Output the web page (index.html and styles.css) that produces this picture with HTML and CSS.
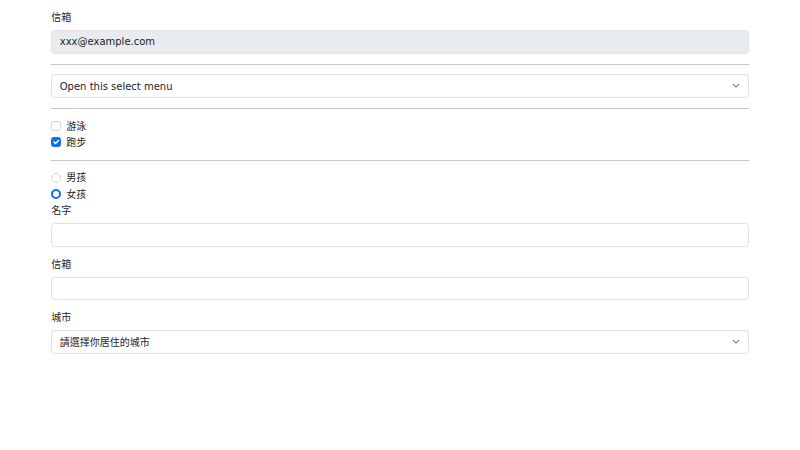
FILE: index.html
```html
<!DOCTYPE html>
<html lang="zh-Hant">
<head>
<meta charset="utf-8">
<title>Form</title>
<link rel="stylesheet" href="styles.css">
</head>
<body>
<div class="container">
  <form class="form">
    <div>
      <label class="form-label">信箱</label>
      <input class="form-control" type="text" value="xxx@example.com" disabled>
    </div>
    <hr class="divider">
    <div class="select-wrap">
      <select class="form-select"><option>Open this select menu</option></select>
      <svg class="chevron" viewBox="0 0 16 16" width="10" height="7.5"><path d="m2 5 6 6 6-6" fill="none" stroke="#343a40" stroke-width="2" stroke-linecap="round" stroke-linejoin="round"/></svg>
    </div>
    <hr class="divider">
    <div class="form-check"><span class="check-box"></span><span>游泳</span></div>
    <div class="form-check"><span class="check-box checked"><svg viewBox="0 0 20 20" width="10" height="10"><path d="m6 10 3 3 6-6" fill="none" stroke="#fff" stroke-width="3" stroke-linecap="round" stroke-linejoin="round"/></svg></span><span>跑步</span></div>
    <hr class="divider">
    <div class="form-check"><span class="radio"></span><span>男孩</span></div>
    <div class="form-check"><span class="radio checked"></span><span>女孩</span></div>
    <div class="field">
      <label class="form-label">名字</label>
      <input class="form-control" type="text">
    </div>
    <div class="field">
      <label class="form-label">信箱</label>
      <input class="form-control" type="text">
    </div>
    <div class="field">
      <label class="form-label">城市</label>
      <div class="select-wrap">
        <select class="form-select"><option>請選擇你居住的城市</option></select>
        <svg class="chevron" viewBox="0 0 16 16" width="10" height="7.5"><path d="m2 5 6 6 6-6" fill="none" stroke="#343a40" stroke-width="2" stroke-linecap="round" stroke-linejoin="round"/></svg>
      </div>
    </div>
  </form>
</div>
</body>
</html>
```
FILE: styles.css
```css
body {
  margin: 0;
  font-family: "DejaVu Sans", "Noto Sans CJK TC", sans-serif;
  font-size: 10px;
  line-height: 15px;
  color: #212529;
  background: #fff;
}
.container {
  max-width: 712.5px;
  margin: 0 auto;
  padding: 0 7.5px;
  box-sizing: border-box;
}
.form {
  margin-top: 10px;
}
.form-label {
  display: block;
  margin-bottom: 5px;
}
.form-control,
.form-select {
  display: block;
  box-sizing: border-box;
  width: 100%;
  margin: 0;
  padding: 3.75px 7.5px;
  font-family: inherit;
  font-size: 10px;
  line-height: 15px;
  color: #212529;
  background: #fff;
  border: 1px solid #dee2e6;
  border-radius: 3.75px;
  height: 23.75px;
}
.form-control:disabled {
  background: #e9ecef;
  color: #212529;
  opacity: 1;
}
.form-select {
  appearance: none;
  -webkit-appearance: none;
  padding-right: 22.5px;
}
.select-wrap {
  display: grid;
}
.select-wrap > * {
  grid-area: 1 / 1;
}
.chevron {
  justify-self: end;
  align-self: center;
  margin-right: 7.5px;
  pointer-events: none;
}
.divider {
  margin: 10px 0 9.5px;
  border: 0;
  border-top: 1px solid #212529;
  opacity: 0.25;
}
.form-check {
  display: flex;
  align-items: center;
  gap: 5px;
  min-height: 15px;
  margin-bottom: 1.25px;
}
.check-box,
.radio {
  box-sizing: border-box;
  width: 10px;
  height: 10px;
  border: 1px solid #d3d7db;
  background: #fff;
  flex: none;
}
.check-box {
  border-radius: 2.5px;
  display: flex;
}
.check-box.checked {
  background: #0d6efd;
  border-color: #0d6efd;
}
.check-box svg {
  margin: -1px;
}
.radio {
  border-radius: 50%;
}
.radio.checked {
  border: 2.5px solid #0d6efd;
}
.field {
  margin-bottom: 10px;
}
```
